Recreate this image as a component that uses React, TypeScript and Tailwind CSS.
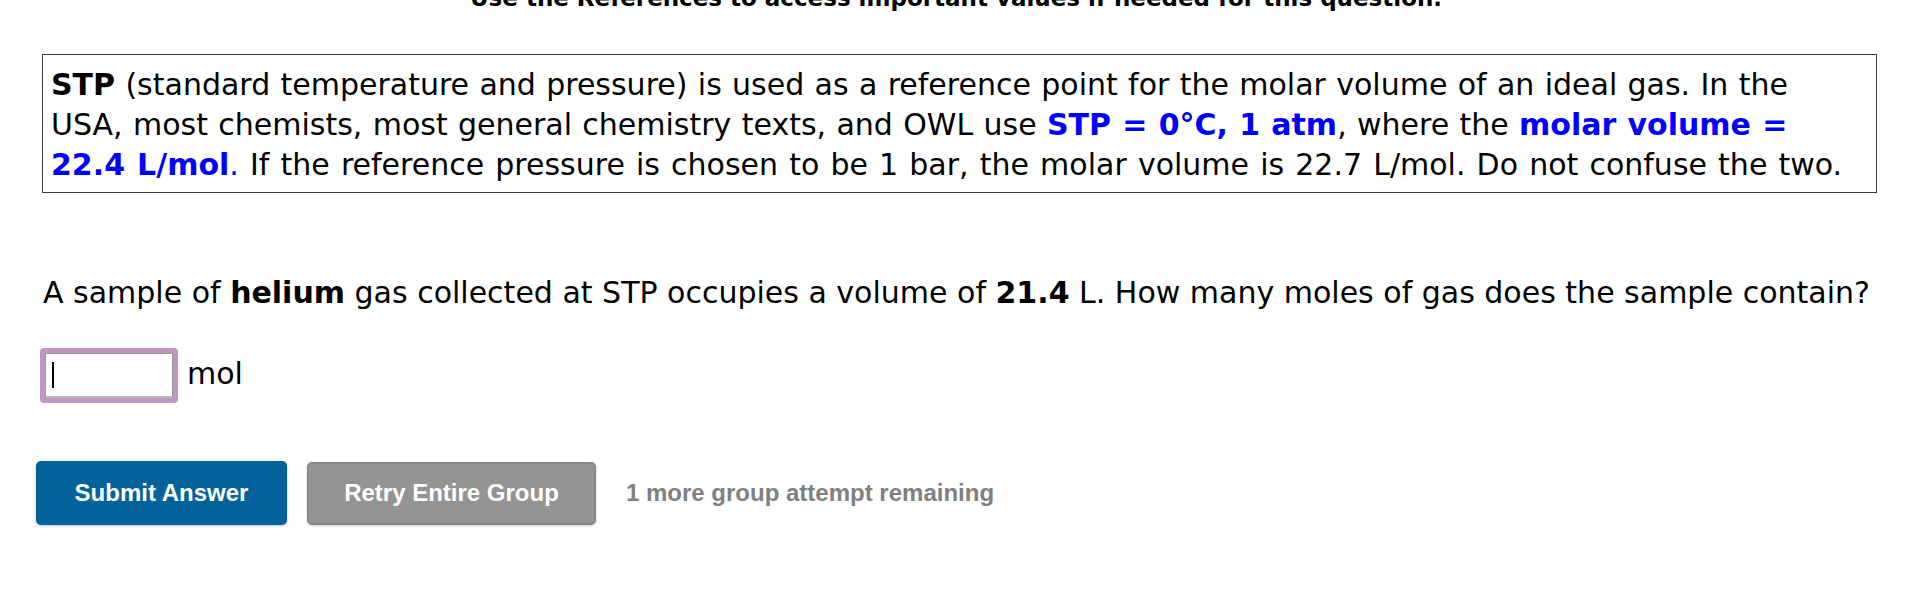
import React from "react";

const verdana = { fontFamily: '"DejaVu Sans", Verdana, sans-serif' };
const arial = { fontFamily: '"Liberation Sans", Arial, Helvetica, sans-serif' };

export default function App() {
  return (
    <div className="flex flex-col bg-white text-black w-[1932px] h-[598px] overflow-hidden" style={verdana}>
      <div className="mt-[-13px] h-[23px] text-[23px] leading-[23px] font-bold text-center pr-[20px] whitespace-nowrap">
        Use the References to access important values if needed for this question.
      </div>

      <div className="mt-[44px] ml-[42px] w-[1835px] border border-[#3a3a3a] pl-[8px] pr-[8px] pt-[10px] pb-[7px] text-[30px] leading-[40px] whitespace-nowrap [word-spacing:0.8px]">
        <b>STP</b> (standard temperature and pressure) is used as a reference point for the molar volume of an ideal gas. In the
        <br />
        USA, most chemists, most general chemistry texts, and OWL use{" "}
        <b className="text-[#0000ff]">STP = 0°C, 1 atm</b>, where the{" "}
        <b className="text-[#0000ff]">molar volume =</b>
        <br />
        <span className="[word-spacing:1.6px]">
          <b className="text-[#0000ff]">22.4 L/mol</b>
          <span className="text-[#0000ff]">.</span> If the reference pressure is chosen to be 1 bar, the molar volume is 22.7 L/mol. Do not confuse the two.
        </span>
      </div>

      <div className="mt-[80px] ml-[43px] text-[30px] leading-[40px] whitespace-nowrap">
        A sample of <b>helium</b> gas collected at STP occupies a volume of <b>21.4</b> L. How many moles of gas does the sample contain?
      </div>

      <div className="mt-[35px] ml-[40px] flex items-center">
        <div className="w-[138px] h-[55px] rounded-[4px] bg-[#c494c2] p-[5px]">
          <div className="h-full w-full bg-white border border-[#9a9a9a] border-b-[2px] border-b-[#b8b8b8] flex items-center pl-[6px]">
            <div className="w-[2px] h-[26px] bg-black" />
          </div>
        </div>
        <span className="ml-[9px] text-[30px] leading-[40px] mt-[-3px]">mol</span>
      </div>

      <div className="mt-[58px] ml-[36px] flex items-center" style={arial}>
        <button className="w-[251px] h-[64px] rounded-[5px] bg-[#03629a] text-white text-[24px] font-bold shadow-[0_1px_3px_rgba(0,0,0,0.25)]">
          Submit Answer
        </button>
        <button className="ml-[20px] w-[289px] h-[63px] rounded-[5px] bg-[#939393] border-2 border-[#878787] text-white text-[24px] font-bold shadow-[0_1px_3px_rgba(0,0,0,0.2)]">
          Retry Entire Group
        </button>
        <span className="ml-[30px] text-[24px] font-bold text-[#808080]">1 more group attempt remaining</span>
      </div>
    </div>
  );
}
